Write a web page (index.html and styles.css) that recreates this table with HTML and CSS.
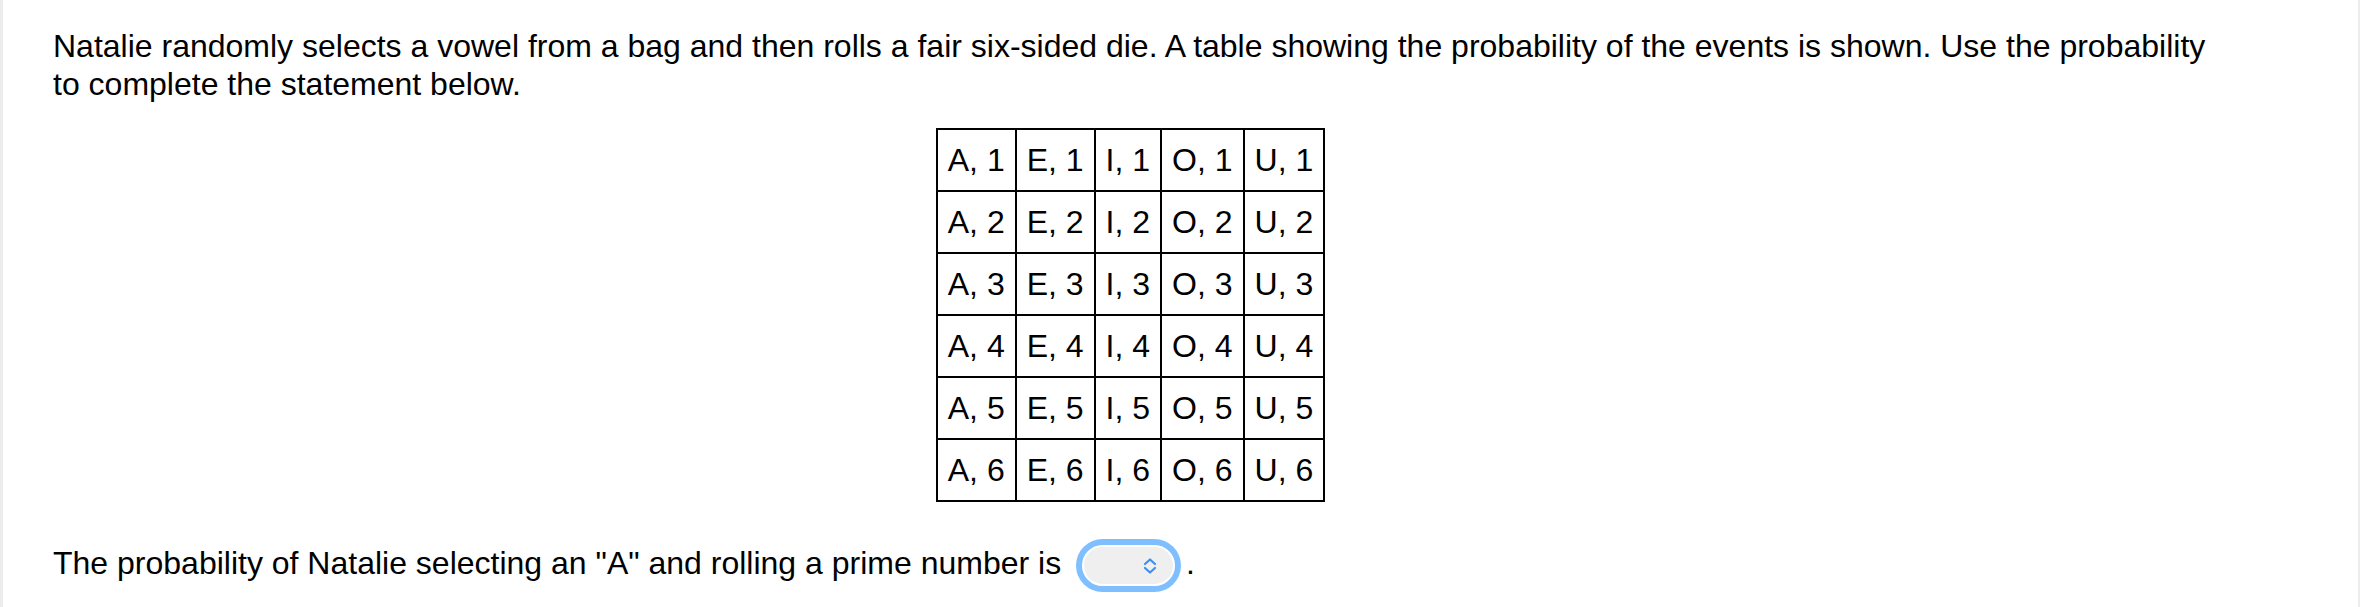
FILE: index.html
```html
<!DOCTYPE html>
<html>
<head>
<meta charset="utf-8">
<link rel="stylesheet" href="styles.css">
</head>
<body>
<div class="frame">
  <div class="content">
    <p class="intro">Natalie randomly selects a vowel from a bag and then rolls a fair six-sided die. A table showing the probability of the events is shown. Use the probability to complete the statement below.</p>
    <table class="grid">
      <tr><td>A, 1</td><td>E, 1</td><td>I, 1</td><td>O, 1</td><td>U, 1</td></tr>
      <tr><td>A, 2</td><td>E, 2</td><td>I, 2</td><td>O, 2</td><td>U, 2</td></tr>
      <tr><td>A, 3</td><td>E, 3</td><td>I, 3</td><td>O, 3</td><td>U, 3</td></tr>
      <tr><td>A, 4</td><td>E, 4</td><td>I, 4</td><td>O, 4</td><td>U, 4</td></tr>
      <tr><td>A, 5</td><td>E, 5</td><td>I, 5</td><td>O, 5</td><td>U, 5</td></tr>
      <tr><td>A, 6</td><td>E, 6</td><td>I, 6</td><td>O, 6</td><td>U, 6</td></tr>
    </table>
    <p class="statement">The probability of Natalie selecting an "A" and rolling a prime number is <span class="select"><span class="select-inner"><svg class="chev" width="14" height="16" viewBox="0 0 14 16"><path d="M2 6 L7 1.5 L12 6 M2 10 L7 14.5 L12 10" fill="none" stroke="#3c8ff0" stroke-width="2.2" stroke-linecap="round" stroke-linejoin="round"/></svg></span></span>.</p>
  </div>
</div>
</body>
</html>
```
FILE: styles.css
```css
html, body {
  margin: 0;
  padding: 0;
  background: #ffffff;
}
body {
  font-family: "Liberation Sans", Arial, sans-serif;
  color: #000;
}
.frame {
  border-left: 3px solid #ececec;
  border-right: 2px solid #ececec;
  height: 607px;
  box-sizing: border-box;
}
.content {
  width: 2155px;
  padding: 27px 0 0 50px;
}
.intro {
  margin: 0;
  font-size: 32px;
  line-height: 38px;
}
.grid {
  margin: 25px auto 0;
  border-collapse: collapse;
  font-size: 32px;
}
.grid td {
  border: 2px solid #000;
  padding: 0 10px;
  height: 60px;
  line-height: 36px;
  white-space: nowrap;
}
.statement {
  margin: 42px 0 0;
  font-size: 32px;
  line-height: 38px;
}
.select {
  display: inline-block;
  vertical-align: middle;
  margin: -8px 5px -8px 6px;
  padding: 6px;
  border-radius: 30px;
  background: #80bfff;
}
.select-inner {
  display: flex;
  align-items: center;
  justify-content: flex-end;
  box-sizing: border-box;
  width: 93px;
  height: 41px;
  padding-right: 16px;
  border: 2px solid #fff;
  border-radius: 22px;
  background: #efefef;
}
.chev {
  display: block;
}
```
